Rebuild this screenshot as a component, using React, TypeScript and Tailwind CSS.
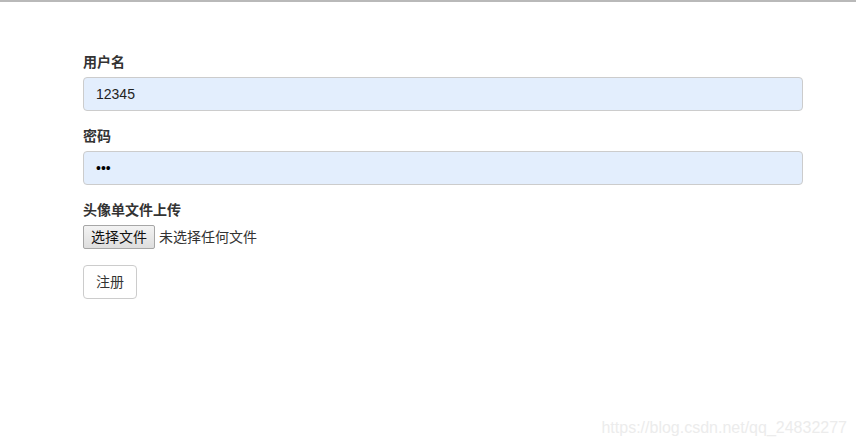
export default function App() {
  return (
    <div
      className="min-h-[445px] bg-white border-t-2 border-[#b9b9b9] text-[14px] leading-[20px] text-[#333]"
      style={{ fontFamily: '"Liberation Sans", "Noto Sans CJK SC", sans-serif' }}
    >
      <form className="ml-[83px] mr-[53px] pt-[50px]">
        {/* 用户名 */}
        <div className="mb-[15px]">
          <label className="block mb-[5px] font-bold">用户名</label>
          <input
            type="text"
            defaultValue="12345"
            className="block w-full h-[34px] px-[12px] rounded-[4px] border border-[#ccc] bg-[#e3eefd] text-[#222] outline-none"
          />
        </div>

        {/* 密码 */}
        <div className="mb-[15px]">
          <label className="block mb-[5px] font-bold">密码</label>
          <input
            type="password"
            defaultValue="123"
            className="block w-full h-[34px] px-[12px] rounded-[4px] border border-[#ccc] bg-[#e3eefd] text-[#000] outline-none"
          />
        </div>

        {/* 头像单文件上传 */}
        <div className="mb-[16px]">
          <label className="block mb-[5px] font-bold">头像单文件上传</label>
          <div className="flex items-center h-[24px]">
            <span className="flex items-center justify-center h-[24px] w-[72px] rounded-[2px] border border-[#a6a6a6] bg-gradient-to-b from-[#f3f3f3] to-[#dedede] text-[#111]">
              选择文件
            </span>
            <span className="ml-[4px] text-[#333]">未选择任何文件</span>
          </div>
        </div>

        <button
          type="button"
          className="h-[34px] px-[12px] rounded-[4px] border border-[#ccc] bg-white text-[#333]"
        >
          注册
        </button>
      </form>

      <div className="flex justify-end pr-[9px] pt-[119px]">
        <span className="text-[16px] text-[#ececec]">https://blog.csdn.net/qq_24832277</span>
      </div>
    </div>
  );
}
